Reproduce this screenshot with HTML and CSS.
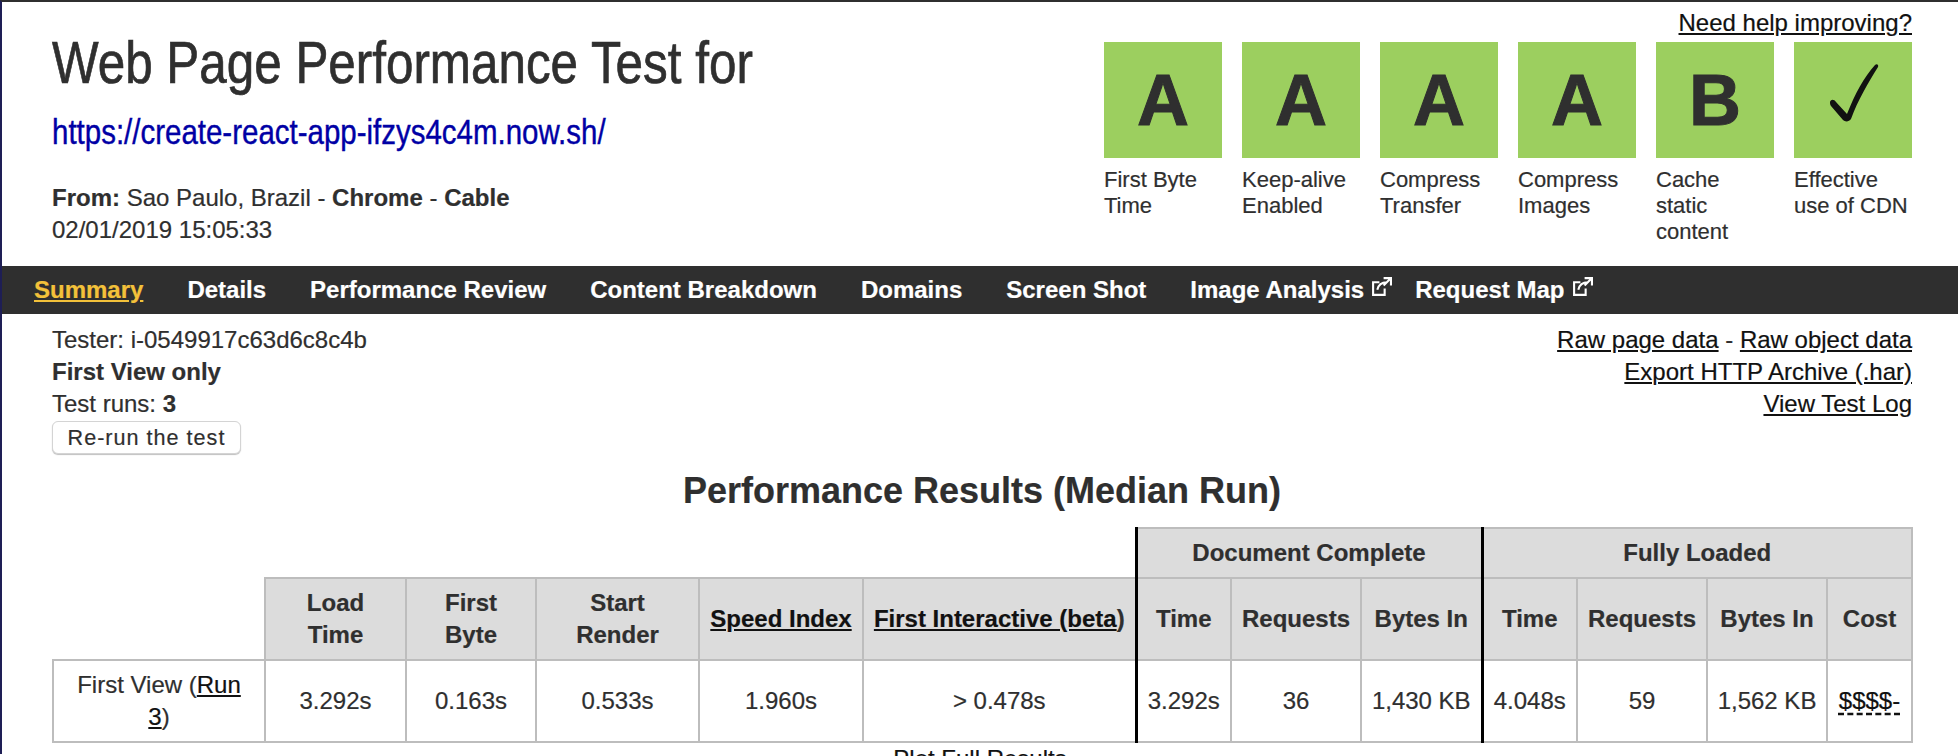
FILE: index.html
```html
<!DOCTYPE html>
<html lang="en">
<head>
<meta charset="utf-8">
<title>Web Page Performance Test</title>
<link rel="stylesheet" href="styles.css">
</head>
<body>
<div class="page">
  <header class="head">
    <div class="head-left">
      <h1 class="title">Web Page Performance Test for</h1>
      <a class="url" href="#">https://create-react-app-ifzys4c4m.now.sh/</a>
      <div class="meta"><b>From:</b> Sao Paulo, Brazil - <b>Chrome</b> - <b>Cable</b><br>02/01/2019 15:05:33</div>
    </div>
    <div class="head-right">
      <a class="help" href="#">Need help improving?</a>
      <div class="grades">
        <div class="grade"><div class="box">A</div><div class="label">First Byte Time</div></div>
        <div class="grade"><div class="box">A</div><div class="label">Keep-alive Enabled</div></div>
        <div class="grade"><div class="box">A</div><div class="label">Compress Transfer</div></div>
        <div class="grade"><div class="box">A</div><div class="label">Compress Images</div></div>
        <div class="grade"><div class="box">B</div><div class="label">Cache static content</div></div>
        <div class="grade"><div class="box"><svg class="check" viewBox="0 0 118 116"><path d="M36 60C37 57 40 57 42 60L53 72C61 52 70 35 81 23C83 21 85 23 84 25C74 41 64 58 57 77C55 80 51 80 49 78L37 64C36 63 36 61 36 60Z"/></svg></div><div class="label">Effective use of CDN</div></div>
      </div>
    </div>
  </header>
  <nav class="nav">
    <a class="active" href="#">Summary</a>
    <a href="#">Details</a>
    <a href="#">Performance Review</a>
    <a href="#">Content Breakdown</a>
    <a href="#">Domains</a>
    <a href="#">Screen Shot</a>
    <a class="ext" href="#">Image Analysis<svg class="ext-icon" viewBox="0 0 20 18"><path d="M13 11v6H2V5h6M6 12c1-4 4-7 9-7M12 1h7v7M19 1l-7 7"/></svg></a>
    <a class="ext" href="#">Request Map<svg class="ext-icon" viewBox="0 0 20 18"><path d="M13 11v6H2V5h6M6 12c1-4 4-7 9-7M12 1h7v7M19 1l-7 7"/></svg></a>
  </nav>
  <section class="info">
    <div>
      <div>Tester: i-0549917c63d6c8c4b</div>
      <div><b>First View only</b></div>
      <div>Test runs: <b>3</b></div>
      <button class="rerun" type="button">Re-run the test</button>
    </div>
    <div class="links">
      <div><a href="#">Raw page data</a> - <a href="#">Raw object data</a></div>
      <div><a href="#">Export HTTP Archive (.har)</a></div>
      <div><a href="#">View Test Log</a></div>
    </div>
  </section>
  <h2 class="results-title">Performance Results (Median Run)</h2>
  <table class="results">
    <colgroup>
      <col class="c1"><col class="c2"><col class="c3"><col class="c4"><col class="c5"><col class="c6">
      <col class="c7"><col class="c8"><col class="c9"><col class="c10"><col class="c11"><col class="c12"><col class="c13">
    </colgroup>
    <tr class="r1">
      <td class="blank" colspan="6"></td>
      <th class="sep" colspan="3">Document Complete</th>
      <th class="sep" colspan="4">Fully Loaded</th>
    </tr>
    <tr class="r2">
      <td class="blank"></td>
      <th>Load<br>Time</th>
      <th>First<br>Byte</th>
      <th>Start<br>Render</th>
      <th><a href="#">Speed Index</a></th>
      <th><a href="#">First Interactive (beta</a>)</th>
      <th class="sep">Time</th>
      <th>Requests</th>
      <th>Bytes In</th>
      <th class="sep">Time</th>
      <th>Requests</th>
      <th>Bytes In</th>
      <th>Cost</th>
    </tr>
    <tr class="r3">
      <td class="view">First View (<a href="#">Run 3</a>)</td>
      <td>3.292s</td>
      <td>0.163s</td>
      <td>0.533s</td>
      <td>1.960s</td>
      <td>&gt; 0.478s</td>
      <td class="sep">3.292s</td>
      <td>36</td>
      <td>1,430 KB</td>
      <td class="sep">4.048s</td>
      <td>59</td>
      <td>1,562 KB</td>
      <td><a class="cost" href="#">$$$$-</a></td>
    </tr>
  </table>
  <div class="plot"><a href="#">Plot Full Results</a></div>
</div>
</body>
</html>
```
FILE: styles.css
```css
html, body {
  margin: 0;
  height: 756px;
  overflow: hidden;
  background: #fff;
}
body {
  font-family: "Liberation Sans", Arial, sans-serif;
  font-size: 24px;
  line-height: 32px;
  color: #2f2f2f;
  -webkit-text-stroke: 0.2px;
}
a { color: #111; }
.page {
  border-top: 2px solid #2f2f2f;
  border-left: 2px solid #1e1e55;
  height: 754px;
  box-sizing: border-box;
}
.head {
  display: flex;
  justify-content: space-between;
  height: 264px;
  padding: 0 46px 0 50px;
}
.title {
  margin: 26px 0 0;
  font-size: 60px;
  line-height: 70px;
  font-weight: 400;
  white-space: nowrap;
  -webkit-text-stroke: 0.7px;
  transform: scaleX(0.823);
  transform-origin: left center;
}
.url {
  display: block;
  margin-top: 14px;
  font-size: 35px;
  line-height: 40px;
  color: #0000a5;
  text-decoration: none;
  white-space: nowrap;
  -webkit-text-stroke: 0.4px;
  transform: scaleX(0.842);
  transform-origin: left center;
}
.meta { margin-top: 30px; }
.head-right {
  display: flex;
  flex-direction: column;
  align-items: flex-end;
}
.help { margin-top: 5px; line-height: 32px; }
.grades {
  display: flex;
  gap: 20px;
  margin-top: 3px;
}
.grade { width: 118px; }
.box {
  height: 116px;
  background: #9ccf5f;
  display: flex;
  align-items: center;
  justify-content: center;
  font-size: 72px;
  font-weight: 700;
  line-height: 1;
  -webkit-text-stroke: 1px;
}
.check { width: 118px; height: 116px; display: block; }
.check path { fill: #111; stroke: none; }
.label {
  margin-top: 9px;
  font-size: 22px;
  line-height: 26px;
  -webkit-text-stroke: 0.2px;
}
.nav {
  display: flex;
  gap: 44px;
  align-items: center;
  height: 48px;
  padding-left: 32px;
  background: #2f2f2f;
  font-weight: 700;
}
.nav a { color: #fff; text-decoration: none; white-space: nowrap; }
.nav a.active { color: #f3c13a; text-decoration: underline; }
.nav a.ext { display: flex; align-items: center; }
.nav a.ext + a.ext { margin-left: -21px; }
.ext-icon {
  width: 21px;
  height: 19px;
  margin: -8px 0 0 7px;
  fill: none;
  stroke: #fff;
  stroke-width: 2;
}
.info {
  display: flex;
  justify-content: space-between;
  padding: 10px 46px 0 50px;
}
.links { text-align: right; }
.rerun {
  display: block;
  box-sizing: border-box;
  width: 189px;
  height: 33px;
  margin: 1px 0 0;
  padding: 0;
  font: 21.6px/1 "Liberation Sans", Arial, sans-serif;
  letter-spacing: 1px;
  color: #2f2f2f;
  background: #fff;
  border: 1px solid #d4d4d4;
  border-radius: 6px;
  box-shadow: 0 1px 1px rgba(0,0,0,.25);
}
.results-title {
  margin: 16px 0 0;
  padding: 0 46px 0 50px;
  text-align: center;
  font-size: 36px;
  line-height: 42px;
}
.results {
  margin: 15px 0 0 50px;
  width: 1859px;
  table-layout: fixed;
  border-collapse: collapse;
}
.c1 { width: 212px; }
.c2 { width: 141px; }
.c3 { width: 130px; }
.c4 { width: 163px; }
.c5 { width: 164px; }
.c6 { width: 273px; }
.c7 { width: 95px; }
.c8 { width: 130px; }
.c9 { width: 121px; }
.c10 { width: 95px; }
.c11 { width: 130px; }
.c12 { width: 120px; }
.c13 { width: 85px; }
.results th, .results td {
  border: 2px solid #bdbdbd;
  padding: 0;
  text-align: center;
  vertical-align: middle;
  font-size: 24px;
}
.results th { background: #dcdcdc; }
.results .blank { border-top: 0; border-left: 0; background: none; }
.r1 .blank { border-bottom: 0; }
.results .view { padding: 0 20px; }
.results .sep { border-left: 3px solid #000; }
.r1 { height: 50px; }
.r2 { height: 82px; }
.r3 { height: 82px; }
.cost { text-decoration: underline dashed; text-underline-offset: 4px; }
.plot { text-align: center; }
```
